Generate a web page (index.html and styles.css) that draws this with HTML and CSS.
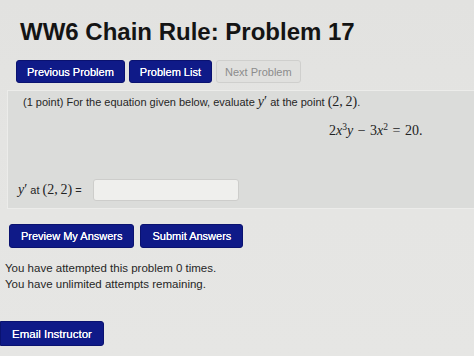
FILE: index.html
```html
<!DOCTYPE html>
<html lang="en">
<head>
<meta charset="utf-8">
<title>WW6 Chain Rule: Problem 17</title>
<link rel="stylesheet" href="styles.css">
</head>
<body>
<div class="page">
  <h1 class="title">WW6 Chain Rule: Problem 17</h1>
  <div class="nav">
    <button class="btn nav-btn">Previous Problem</button>
    <button class="btn nav-btn">Problem List</button>
    <button class="btn nav-btn disabled">Next Problem</button>
  </div>
  <div class="problem">
    <p class="statement">(1 point) For the equation given below, evaluate <span class="m"><i>y</i>&prime;</span> at the point <span class="m">(2,&thinsp;2)</span>.</p>
    <div class="display"><span class="m">2<i>x</i><sup>3</sup><i>y</i> &minus; 3<i>x</i><sup>2</sup> = 20.</span></div>
    <div class="answer">
      <label class="answer-label"><span class="m"><i>y</i>&prime;</span> at <span class="m">(2,&thinsp;2)</span> =</label>
      <input class="answer-input" type="text">
    </div>
  </div>
  <div class="actions">
    <button class="btn act-btn">Preview My Answers</button>
    <button class="btn act-btn">Submit Answers</button>
  </div>
  <p class="attempts">You have attempted this problem 0 times.<br>You have unlimited attempts remaining.</p>
  <button class="btn email-btn">Email Instructor</button>
</div>
</body>
</html>
```

FILE: styles.css
```css
html, body {
  margin: 0;
  padding: 0;
}
body {
  width: 474px;
  height: 356px;
  overflow: hidden;
  background: linear-gradient(180deg, #e2e2e0 0%, #e5e5e3 60%, #e6e6e4 100%);
  font-family: "Liberation Sans", Arial, sans-serif;
  color: #262626;
}
.page {
  display: flex;
  flex-direction: column;
  align-items: flex-start;
}
.title {
  margin: 0 0 0 20px;
  padding-top: 18px;
  font-size: 24px;
  line-height: 28px;
  font-weight: bold;
  color: #141414;
}
.btn {
  font-family: "Liberation Sans", Arial, sans-serif;
  font-size: 11px;
  color: #fff;
  background: #0f1a88;
  border: 1px solid #0a1270;
  border-radius: 3px;
  padding: 0 10px;
  cursor: pointer;
  text-shadow: 0 0 0.4px #fff;
}
.nav {
  display: flex;
  gap: 4px;
  margin: 14px 0 0 16px;
}
.nav-btn {
  height: 23px;
}
.nav-btn.disabled {
  background: #e0e0de;
  border-color: #cfcfcd;
  color: #8c8c8c;
  padding: 0 8px;
  text-shadow: none;
}
.problem {
  align-self: stretch;
  margin: 7px 0 0 7px;
  background: #dbdcda;
  border: 1px solid #ececea;
  border-right: none;
  padding: 0 0 7px 0;
}
.statement {
  margin: 0;
  padding: 3px 0 0 15px;
  font-size: 11px;
  line-height: 15px;
  color: #262626;
}
.m {
  font-family: "Liberation Serif", "Times New Roman", serif;
  font-size: 14px;
  color: #222;
}
.m i {
  font-style: italic;
}
.m sup {
  font-size: 9.5px;
  line-height: 0;
  vertical-align: 5px;
}
.display {
  padding: 12px 0 0 321px;
  line-height: 16px;
  word-spacing: 1px;
}
.answer {
  display: flex;
  align-items: center;
  gap: 11px;
  margin-top: 40px;
  padding-left: 10px;
}
.answer-label {
  font-size: 11px;
  line-height: 15px;
}
.answer-input {
  width: 146px;
  height: 22px;
  box-sizing: border-box;
  background: #efefed;
  border: 1px solid #cdcdcb;
  border-radius: 3px;
  margin: 0;
}
.actions {
  display: flex;
  gap: 6px;
  margin: 15px 0 0 9px;
}
.act-btn {
  height: 24px;
  padding: 0 11px;
}
.attempts {
  margin: 12px 0 0 5px;
  font-size: 11.5px;
  line-height: 16px;
  color: #262626;
}
.email-btn {
  margin-top: 29px;
  height: 25px;
  width: 104px;
  padding: 0 0 0 11px;
  text-align: left;
  font-size: 11.5px;
  border-radius: 0 3px 3px 0;
}
```
